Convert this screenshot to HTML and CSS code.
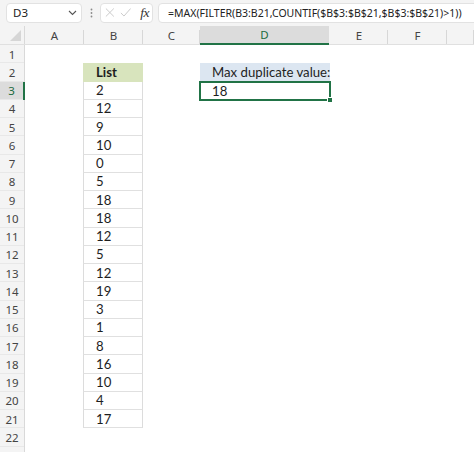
FILE: index.html
```html
<!DOCTYPE html>
<html>
<head>
<meta charset="utf-8">
<link rel="stylesheet" href="styles.css">
</head>
<body>
<div class="app">
  <div class="fbar">
    <div class="namebox"><span>D3</span>
      <svg class="chev" width="9" height="6" viewBox="0 0 9 6"><path d="M1 1 L4.5 4.5 L8 1" fill="none" stroke="#555" stroke-width="1.1"/></svg>
    </div>
    <div class="dots"><svg width="3" height="10" viewBox="0 0 3 10"><circle cx="1.5" cy="1.5" r="0.9" fill="#8a8a8a"/><circle cx="1.5" cy="5" r="0.9" fill="#8a8a8a"/><circle cx="1.5" cy="8.5" r="0.9" fill="#8a8a8a"/></svg></div>
    <div class="iconbox">
      <svg width="11" height="11" viewBox="0 0 11 11"><path d="M1 1 L10 10 M10 1 L1 10" stroke="#c4c4c4" stroke-width="1" fill="none"/></svg>
      <svg width="13" height="11" viewBox="0 0 13 11"><path d="M1 6 L4.5 9.5 L12 1" stroke="#c4c4c4" stroke-width="1" fill="none"/></svg>
      <span class="fx">fx</span>
    </div>
    <div class="formula">=MAX(FILTER(B3:B21,COUNTIF($B$3:$B$21,$B$3:$B$21)&gt;1))</div>
  </div>
  <div class="sheet">
    <div class="colhead">
      <div class="corner"><svg width="11" height="11" viewBox="0 0 11 11"><path d="M11 0 L11 11 L0 11 Z" fill="#d6d6d6"/></svg></div>
      <div class="ch">A</div>
      <div class="ch">B</div>
      <div class="ch">C</div>
      <div class="ch chsel">D</div>
      <div class="ch">E</div>
      <div class="ch">F</div>
      <div class="ch"></div>
    </div>
    <div class="row"><div class="rh">1</div></div>
    <div class="row"><div class="rh">2</div><div class="cb cbh">List</div><div class="cd cdh">Max duplicate value:</div></div>
    <div class="row"><div class="rh rhsel">3</div><div class="cb">2</div><div class="cd sel">18</div></div>
    <div class="row"><div class="rh">4</div><div class="cb">12</div></div>
    <div class="row"><div class="rh">5</div><div class="cb">9</div></div>
    <div class="row"><div class="rh">6</div><div class="cb">10</div></div>
    <div class="row"><div class="rh">7</div><div class="cb">0</div></div>
    <div class="row"><div class="rh">8</div><div class="cb">5</div></div>
    <div class="row"><div class="rh">9</div><div class="cb">18</div></div>
    <div class="row"><div class="rh">10</div><div class="cb">18</div></div>
    <div class="row"><div class="rh">11</div><div class="cb">12</div></div>
    <div class="row"><div class="rh">12</div><div class="cb">5</div></div>
    <div class="row"><div class="rh">13</div><div class="cb">12</div></div>
    <div class="row"><div class="rh">14</div><div class="cb">19</div></div>
    <div class="row"><div class="rh">15</div><div class="cb">3</div></div>
    <div class="row"><div class="rh">16</div><div class="cb">1</div></div>
    <div class="row"><div class="rh">17</div><div class="cb">8</div></div>
    <div class="row"><div class="rh">18</div><div class="cb">16</div></div>
    <div class="row"><div class="rh">19</div><div class="cb">10</div></div>
    <div class="row"><div class="rh">20</div><div class="cb">4</div></div>
    <div class="row"><div class="rh">21</div><div class="cb">17</div></div>
    <div class="row"><div class="rh">22</div></div>
    <div class="row"><div class="rh"></div></div>
  </div>
</div>
</body>
</html>
```
FILE: styles.css
```css
html, body {
  margin: 0;
  padding: 0;
  background: #ffffff;
}
.app {
  width: 474px;
  height: 452px;
  overflow: hidden;
  background: #ffffff;
  font-family: "Noto Sans", sans-serif;
}
.fbar {
  height: 26px;
  box-sizing: border-box;
  background: #f4f4f4;
  display: flex;
  align-items: center;
  padding-left: 6px;
  padding-bottom: 1px;
}
.namebox {
  width: 76px;
  height: 20px;
  box-sizing: border-box;
  background: #ffffff;
  border: 1px solid #e2e2e2;
  border-radius: 4px;
  display: flex;
  align-items: center;
  justify-content: space-between;
  padding: 0 4px 0 6px;
  font-size: 11.5px;
  color: #222;
}
.dots {
  width: 18px;
  display: flex;
  justify-content: center;
  align-items: center;
}
.iconbox {
  width: 53px;
  height: 20px;
  box-sizing: border-box;
  background: #ffffff;
  border: 1px solid #e2e2e2;
  border-radius: 4px;
  display: flex;
  align-items: center;
  padding: 0 3px 0 4px;
  gap: 5px;
}
.fx {
  font-family: "Liberation Serif", serif;
  font-style: italic;
  font-size: 13.5px;
  color: #333;
  margin-left: 4px;
  letter-spacing: -0.5px;
}
.formula {
  flex: 1;
  margin-left: 5px;
  margin-right: -10px;
  height: 20px;
  box-sizing: border-box;
  background: #ffffff;
  border: 1px solid #e2e2e2;
  border-radius: 4px;
  display: flex;
  align-items: center;
  padding-left: 9px;
  font-size: 10.5px;
  color: #222;
  white-space: nowrap;
  overflow: hidden;
}
.sheet {
  display: flex;
  flex-direction: column;
}
.colhead, .row {
  display: grid;
  grid-template-columns: 25px 59px 59px 57px 130px 58px 59px 1fr;
}
.colhead {
  height: 19px;
  box-sizing: border-box;
  background: #f4f4f4;
  border-bottom: 1px solid #e0e0e0;
}
.corner {
  display: flex;
  align-items: flex-end;
  justify-content: flex-end;
  padding: 0 3px 3px 0;
  border-right: 1px solid #d9d9d9;
}
.ch {
  display: flex;
  align-items: center;
  justify-content: center;
  font-size: 11.5px;
  color: #444;
  background: linear-gradient(#d7d7d7, #d7d7d7) right 4px / 1px 14px no-repeat;
}
.chsel {
  background: #dcdcdc;
  border-bottom: 2px solid #217346;
  color: #1d6b3f;
  margin-bottom: -1px;
  margin-right: 1px;
}
.row {
  height: 18.25px;
}
.rh {
  grid-column: 1;
  display: flex;
  align-items: center;
  justify-content: center;
  font-size: 11.5px;
  color: #444;
  background: #f4f4f4;
  border-right: 1px solid #d9d9d9;
  box-shadow: inset 0 -1px 0 #e8e8e8;
}
.rhsel {
  background: #dcdcdc;
  border-right: 2px solid #217346;
  color: #1d6b3f;
}
.cb, .cd {
  display: flex;
  align-items: center;
  padding-left: 12px;
  font-family: "Lato", "Noto Sans", sans-serif;
  font-size: 13.2px;
  color: #1e1e1e;
  white-space: nowrap;
}
.cb {
  grid-column: 3;
  border-left: 1px solid #dcdcdc;
  border-right: 1px solid #dcdcdc;
  border-bottom: 1px solid #e0e0e0;
  margin-left: -1px;
}
.cbh {
  background: #d8e4bd;
  font-weight: bold;
  border-color: #d8e4bd;
}
.cd {
  grid-column: 5;
}
.cdh {
  background: #dce6f1;
}
.sel {
  position: relative;
}
.sel::after {
  content: "";
  position: absolute;
  left: -1px;
  top: -1px;
  right: -1px;
  bottom: -1px;
  border: 2px solid #217346;
}
.sel::before {
  content: "";
  position: absolute;
  right: -3px;
  bottom: -3px;
  width: 4px;
  height: 4px;
  background: #217346;
  border: 1px solid #ffffff;
  z-index: 2;
}
```
